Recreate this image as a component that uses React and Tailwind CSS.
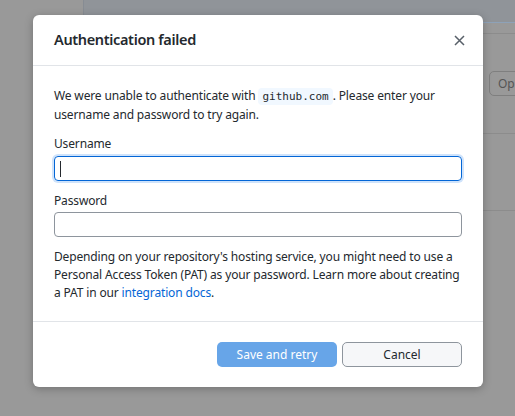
export default function App() {
  return (
    <div
      className="relative w-[515px] h-[416px] overflow-hidden bg-[#999999]"
      style={{ fontFamily: '"Noto Sans", "Liberation Sans", sans-serif' }}
    >
      {/* dimmed application window behind the modal */}
      <div className="flex h-full">
        <div className="w-[83px] shrink-0" />
        <div className="flex flex-1 flex-col">
          <div className="h-[23px] border-b border-[#8ea2b8] border-l border-l-[#878c93] bg-[#909499]" />
          <div className="h-[11px] border-b border-[#8c8c8c]" />
          <div className="flex h-[100px] items-start justify-end border-b border-[#8c8c8c] pt-[37px]">
            <div className="mr-[-30px] flex h-[25px] w-[56px] items-center rounded-[5px] border border-[#7f7f7f] pl-[8px] text-[12px] text-[#555]">
              Op
            </div>
          </div>
          <div className="h-[77px] border-b border-[#8c8c8c]" />
        </div>
      </div>

      {/* modal dialog */}
      <div className="absolute left-[33px] top-[15px] w-[450px] rounded-[6px] bg-white shadow-[0_2px_8px_rgba(0,0,0,0.25)]">
        <header className="flex h-[51px] items-center justify-between border-b border-[#e1e4e8] pl-[21px] pr-[14px]">
          <h1 className="text-[14.5px] font-semibold tracking-[-0.35px] text-[#24292e]">Authentication failed</h1>
          <button className="flex h-[20px] w-[20px] items-center justify-center text-[#586069]">
            <svg width="11" height="11" viewBox="0 0 11 11" fill="none" stroke="currentColor" strokeWidth="1.5">
              <path d="M1 1L10 10M10 1L1 10" />
            </svg>
          </button>
        </header>

        <div className="px-[21px] pt-[21px] pb-[19px] text-[12px] leading-[18px] tracking-[-0.15px] text-[#24292e]">
          <p>
            We were unable to authenticate with{' '}
            <code
              className="rounded-[4px] bg-[#f1f8ff] px-[4px] py-[2px] text-[11px] tracking-normal text-[#24292e]"
              style={{ fontFamily: '"DejaVu Sans Mono", "Liberation Mono", monospace' }}
            >
              github.com
            </code>
            . Please enter your username and password to try again.
          </p>

          <label className="mt-[11px] block">Username</label>
          <div className="mt-[3px] flex h-[25px] items-center rounded-[4px] border border-[#0366d6] pl-[5px] shadow-[0_0_0_2px_#cfe3fb]">
            <span className="h-[16px] w-px bg-[#24292e]" />
          </div>

          <label className="mt-[11px] block">Password</label>
          <div className="mt-[2px] h-[25px] rounded-[4px] border border-[#8e959d]" />

          <p className="mt-[11px]">
            Depending on your repository's hosting service, you might need to use a Personal Access Token (PAT) as
            your password. Learn more about creating a PAT in our{' '}
            <span className="text-[#0366d6]">integration docs</span>.
          </p>
        </div>

        <footer className="flex justify-end gap-[5px] border-t border-[#e1e4e8] px-[21px] pt-[20px] pb-[20px]">
          <button className="h-[25px] w-[120px] rounded-[5px] bg-[#67a5e8] text-[12px] text-white">
            Save and retry
          </button>
          <button className="h-[25px] w-[120px] rounded-[5px] border border-[#8e959d] bg-[#f6f7f9] text-[12px] text-[#24292e]">
            Cancel
          </button>
        </footer>
      </div>
    </div>
  );
}
